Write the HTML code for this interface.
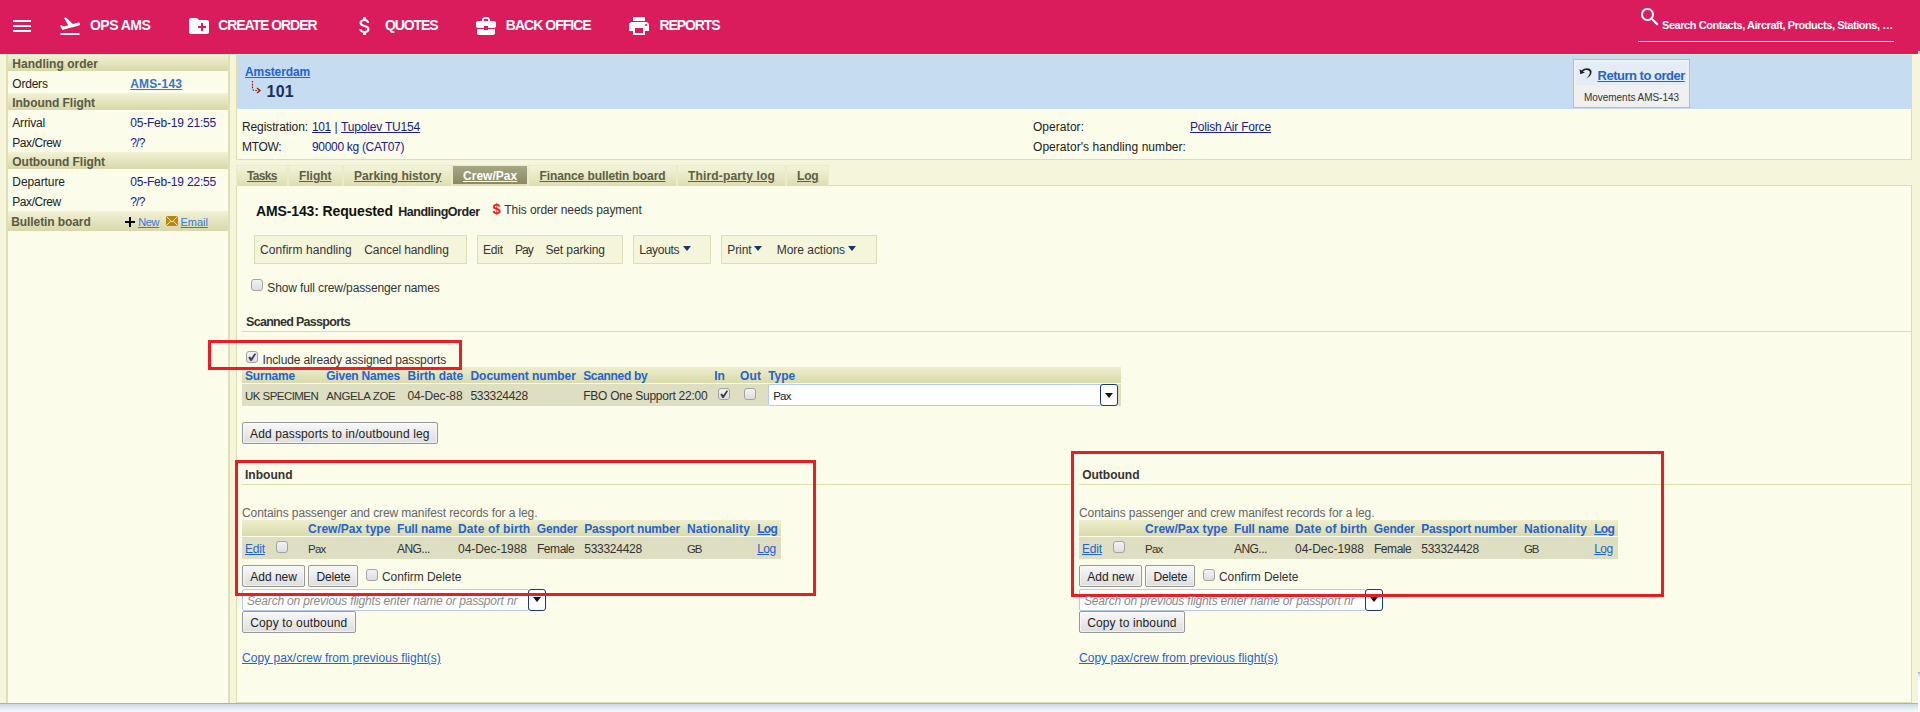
<!DOCTYPE html>
<html lang="en">
<head>
<meta charset="utf-8">
<title>Crew/Pax - AMS-143</title>
<style>
html,body{margin:0;padding:0;}
body{background:#F5F5DC;font-family:"Liberation Sans",sans-serif;font-size:12px;overflow:hidden;}
#page{position:relative;width:1920px;height:712px;overflow:hidden;background:#F5F5DC;}
#page div,#page svg{position:absolute;box-sizing:border-box;}
.t{position:absolute;white-space:pre;font-family:"Liberation Sans",sans-serif;text-decoration-thickness:1px;text-underline-offset:0.5px;}
a.t{cursor:pointer;}
.btn{background:linear-gradient(#f8f8f8,#dedede);border:1px solid #979797;border-radius:2px;box-shadow:inset 0 0 0 1px rgba(255,255,255,.55);}
.cb{background:linear-gradient(#f2f2f2,#dedede);border:1px solid #A3A3A3;border-radius:3px;}
.hrow{background:linear-gradient(#F2F2D6,#D8D8AA);}
.thead{background:linear-gradient(#EEEECC,#DADAAC);}
.trow{background:#DEDEC2;}
.red{border:3px solid #ED1C24;}

</style>
</head>
<body>
<div id="page">
<div style="left:6px;top:54px;width:224px;height:650px;background:#FBFCEA;border-left:2px solid #E0E0B4;border-right:2px solid #E0E0B4;"></div>
<div class="hrow" style="left:8px;top:54px;width:220px;height:17.3px;"></div>
<div class="hrow" style="left:8px;top:93px;width:220px;height:17.3px;"></div>
<div class="hrow" style="left:8px;top:152px;width:220px;height:17.3px;"></div>
<div class="hrow" style="left:8px;top:211px;width:220px;height:19.5px;"></div>
<svg style="left:125px;top:217px" width="10" height="10" viewBox="0 0 10 10"><path d="M4 0h2v4h4v2H6v4H4V6H0V4h4z" fill="#000"/></svg>
<svg style="left:166px;top:216px" width="12" height="10" viewBox="0 0 12 10"><rect width="12" height="10" fill="#B8860B"/><path d="M0.3 0.3L6 6L11.7 0.3M0.3 9.7L4.6 5M11.7 9.7L7.4 5" stroke="#F6EFD0" stroke-width="1" fill="none"/></svg>
<div style="left:236px;top:55px;width:1676px;height:105px;background:#FBFCEA;border:1px solid #DDDDB0;border-top:none;"></div>
<div style="left:237px;top:55px;width:1674px;height:53.5px;background:#C5DCF1;"></div>
<svg style="left:250px;top:80px" width="12" height="15" viewBox="0 0 12 15"><path d="M2.5 1V8Q2.5 10.5 5 10.5H8.5" stroke="#9B0E0E" stroke-width="1.1" stroke-dasharray="1.6 1.2" fill="none"/><path d="M7 8L10 10.5L7 13" stroke="#9B0E0E" stroke-width="1.3" fill="none"/></svg>
<div style="left:1573px;top:59px;width:117px;height:49px;background:#F0F0F0;border:1px solid #BDBDBD;"></div>
<div style="left:1576px;top:62px;width:111px;height:23px;background:#E4ECF5;"></div>
<svg style="left:1579px;top:67px" width="13" height="12" viewBox="0 0 13 12"><path d="M0.5 2.2L1.3 7.2L6 5.6L3.8 4.6C5.6 2.6 9.6 2.4 10.6 4.6C11.4 6.6 9.6 9.6 7 11.4C11.4 9.8 13.4 6.4 12.2 3.6C10.8 0.6 5.6 0.6 2.6 3.6Z" fill="#222"/></svg>
<div style="left:236px;top:185px;width:1676px;height:518px;background:#FBFCEA;border:1px solid #DDDDB0;"></div>
<div style="left:236px;top:165px;width:52px;height:21px;background:linear-gradient(#F3F3DA,#DEDEB0);border:1px solid #EBEBCB;border-bottom:none;"></div>
<div style="left:288px;top:165px;width:55px;height:21px;background:linear-gradient(#F3F3DA,#DEDEB0);border:1px solid #EBEBCB;border-bottom:none;"></div>
<div style="left:343px;top:165px;width:109px;height:21px;background:linear-gradient(#F3F3DA,#DEDEB0);border:1px solid #EBEBCB;border-bottom:none;"></div>
<div style="left:452px;top:165px;width:76px;height:21px;background:linear-gradient(#F3F3DA,#DEDEB0);border:1px solid #EBEBCB;border-bottom:none;"></div>
<div style="left:453px;top:166px;width:74px;height:18px;background:linear-gradient(#A7A785,#8A8A62);"></div>
<div style="left:528px;top:165px;width:149px;height:21px;background:linear-gradient(#F3F3DA,#DEDEB0);border:1px solid #EBEBCB;border-bottom:none;"></div>
<div style="left:677px;top:165px;width:109px;height:21px;background:linear-gradient(#F3F3DA,#DEDEB0);border:1px solid #EBEBCB;border-bottom:none;"></div>
<div style="left:786px;top:165px;width:43px;height:21px;background:linear-gradient(#F3F3DA,#DEDEB0);border:1px solid #EBEBCB;border-bottom:none;"></div>
<div style="left:254px;top:235px;width:213px;height:29px;background:#F5F5DC;border:1px solid #DEDEB2;"></div>
<div style="left:477px;top:235px;width:146px;height:29px;background:#F5F5DC;border:1px solid #DEDEB2;"></div>
<div style="left:633px;top:235px;width:78px;height:29px;background:#F5F5DC;border:1px solid #DEDEB2;"></div>
<div style="left:721px;top:235px;width:156px;height:29px;background:#F5F5DC;border:1px solid #DEDEB2;"></div>
<svg style="left:682.5px;top:246px" width="8" height="5" viewBox="0 0 8 5"><path d="M0 0H8L4 5Z" fill="#1B3664"/></svg>
<svg style="left:754.4px;top:246px" width="8" height="5" viewBox="0 0 8 5"><path d="M0 0H8L4 5Z" fill="#1B3664"/></svg>
<svg style="left:848.4px;top:246px" width="8" height="5" viewBox="0 0 8 5"><path d="M0 0H8L4 5Z" fill="#1B3664"/></svg>
<div class="cb" style="left:251px;top:279.3px;width:12px;height:12px;"></div>
<div style="left:242px;top:331px;width:1669px;height:1px;background:#DCDCAE;"></div>
<div class="thead" style="left:242px;top:367px;width:879px;height:16px;"></div>
<div class="trow" style="left:242px;top:384px;width:879px;height:22px;"></div>
<div class="cb" style="left:718px;top:388px;width:12px;height:12px;"><svg style="left:0px;top:0px" width="10" height="10" viewBox="0 0 10 10"><path d="M1.3 5.6L3 4.6L4.2 6.3L7.7 1.2L9.1 2L4.7 8.9H3.5Z" fill="#3C3C3C"/></svg></div>
<div class="cb" style="left:744px;top:388px;width:12px;height:12px;"></div>
<div style="left:768px;top:384px;width:350px;height:22px;background:#FFFFFF;border:1px solid #B4CDE8;border-radius:2px;"></div>
<div style="left:1100px;top:384px;width:18px;height:22px;background:#FFFFFF;border:1px solid #1B3A6B;border-radius:3px;"><svg style="left:4px;top:8px" width="8" height="5" viewBox="0 0 8 5"><path d="M0 0H8L4 5Z" fill="#111"/></svg></div>
<div class="red" style="left:208px;top:340px;width:254px;height:30px;"></div>
<div class="cb" style="left:246px;top:351.2px;width:12px;height:12px;"><svg style="left:0px;top:0px" width="10" height="10" viewBox="0 0 10 10"><path d="M1.3 5.6L3 4.6L4.2 6.3L7.7 1.2L9.1 2L4.7 8.9H3.5Z" fill="#3C3C3C"/></svg></div>
<div class="btn" style="left:242px;top:422px;width:196px;height:22px;"></div>
<div style="left:242px;top:484px;width:828px;height:1px;background:#DCDCAE;"></div>
<div style="left:1079px;top:484px;width:832px;height:1px;background:#DCDCAE;"></div>
<div class="thead" style="left:242px;top:520px;width:539px;height:16px;"></div>
<div class="trow" style="left:242px;top:537px;width:539px;height:22px;"></div>
<div class="cb" style="left:276px;top:541px;width:12px;height:12px;"></div>
<div class="btn" style="left:242px;top:565.2px;width:62.5px;height:22px;"></div>
<div class="btn" style="left:308.3px;top:565.2px;width:49.5px;height:22px;"></div>
<div class="cb" style="left:366px;top:568.5px;width:12px;height:12px;"></div>
<div style="left:242px;top:589px;width:287px;height:22px;background:#FFFFFF;border:1px solid #B4CDE8;border-radius:2px;"></div>
<div style="left:528px;top:589px;width:17.6px;height:22px;background:#FFFFFF;border:1px solid #1B3A6B;border-radius:3px;"><svg style="left:4px;top:7px" width="8" height="5" viewBox="0 0 8 5"><path d="M0 0H8L4 5Z" fill="#111"/></svg></div>
<div class="btn" style="left:242px;top:611px;width:113.8px;height:22px;"></div>
<div class="red" style="left:235px;top:460px;width:581px;height:136px;"></div>
<div class="thead" style="left:1079px;top:520px;width:539px;height:16px;"></div>
<div class="trow" style="left:1079px;top:537px;width:539px;height:22px;"></div>
<div class="cb" style="left:1113px;top:541px;width:12px;height:12px;"></div>
<div class="btn" style="left:1079px;top:565.2px;width:62.5px;height:22px;"></div>
<div class="btn" style="left:1145.3px;top:565.2px;width:49.5px;height:22px;"></div>
<div class="cb" style="left:1203px;top:568.5px;width:12px;height:12px;"></div>
<div style="left:1079px;top:589px;width:287px;height:22px;background:#FFFFFF;border:1px solid #B4CDE8;border-radius:2px;"></div>
<div style="left:1365px;top:589px;width:17.6px;height:22px;background:#FFFFFF;border:1px solid #1B3A6B;border-radius:3px;"><svg style="left:4px;top:7px" width="8" height="5" viewBox="0 0 8 5"><path d="M0 0H8L4 5Z" fill="#111"/></svg></div>
<div class="btn" style="left:1079px;top:611px;width:105.5px;height:22px;"></div>
<div class="red" style="left:1071px;top:451px;width:593px;height:146px;"></div>
<div style="left:0px;top:703px;width:1920px;height:1px;background:#9FB4C8;"></div>
<div style="left:0px;top:704px;width:1920px;height:8px;background:linear-gradient(#C9D7E5 0px,#E3ECF3 4px,#F1F9FC 8px);"></div>
<div style="left:1918px;top:672px;width:2px;height:40px;background:linear-gradient(#93A9C2 0px,#C9D7E5 2px,#FFFFFF 6px);"></div>
<div style="left:0px;top:0px;width:1920px;height:51px;background:#DA1C5D;"></div>
<div style="left:0px;top:51px;width:1918px;height:3px;background:#DA1C5D;"></div>
<div style="left:13px;top:20px;width:18px;height:2px;background:#fff;"></div>
<div style="left:13px;top:25px;width:18px;height:2px;background:#fff;"></div>
<div style="left:13px;top:30px;width:18px;height:2px;background:#fff;"></div>
<svg style="left:58px;top:13.5px" width="24" height="24" viewBox="0 0 24 24"><path d="M2.5 19h19v2h-19zm19.57-9.36c-.21-.8-1.04-1.28-1.84-1.06L14.92 10l-6.9-6.43-1.93.51 4.14 7.17-4.97 1.33-1.97-1.54-1.45.39 1.82 3.16.77 1.33 1.6-.43 5.31-1.42 4.35-1.16L21 11.49c.81-.23 1.28-1.05 1.07-1.85z" fill="#fff"/></svg>
<svg style="left:187px;top:13.5px" width="24" height="24" viewBox="0 0 24 24"><path d="M20 6h-8l-2-2H4c-1.11 0-1.99.89-1.99 2L2 18c0 1.11.89 2 2 2h16c1.11 0 2-.89 2-2V8c0-1.11-.89-2-2-2zm-1 8h-3v3h-2v-3h-3v-2h3V9h2v3h3v2z" fill="#fff"/></svg>
<svg style="left:353px;top:14px" width="24" height="24" viewBox="0 0 24 24"><path d="M11.8 10.9c-2.27-.59-3-1.2-3-2.15 0-1.09 1.01-1.85 2.7-1.85 1.78 0 2.44.85 2.5 2.1h2.21c-.07-1.72-1.12-3.3-3.21-3.81V3h-3v2.16c-1.94.42-3.5 1.68-3.5 3.61 0 2.31 1.91 3.46 4.7 4.13 2.5.6 3 1.48 3 2.41 0 .69-.49 1.79-2.7 1.79-2.06 0-2.87-.92-2.98-2.1h-2.2c.12 2.19 1.76 3.42 3.68 3.83V21h3v-2.15c1.95-.37 3.5-1.5 3.5-3.55 0-2.84-2.43-3.81-4.7-4.4z" fill="#fff"/></svg>
<svg style="left:474px;top:14px" width="24" height="24" viewBox="0 0 24 24"><path d="M10 16v-1H3.01L3 19c0 1.11.89 2 2 2h14c1.11 0 2-.89 2-2v-4h-7v1h-4zm10-9h-4.01V5l-2-2h-4l-2 2v2H4c-1.1 0-2 .9-2 2v3c0 1.11.89 2 2 2h6v-2h4v2h6c1.1 0 2-.9 2-2V9c0-1.1-.9-2-2-2zm-6 0h-4V5h4v2z" fill="#fff"/></svg>
<svg style="left:627px;top:14px" width="24" height="24" viewBox="0 0 24 24"><path d="M19 8H5c-1.66 0-3 1.34-3 3v6h4v4h12v-4h4v-6c0-1.66-1.34-3-3-3zm-3 11H8v-5h8v5zm3-7c-.55 0-1-.45-1-1s.45-1 1-1 1 .45 1 1-.45 1-1 1zm-1-9H6v4h12V3z" fill="#fff"/></svg>
<svg style="left:1637.5px;top:5px" width="24" height="24" viewBox="0 0 24 24"><path d="M15.5 14h-.79l-.28-.27C15.41 12.59 16 11.11 16 9.5 16 5.91 13.09 3 9.5 3S3 5.91 3 9.500 5.91 16 9.5 16c1.61 0 3.09-.59 4.23-1.570l.27.28v.79l5 4.99L20.49 19l-4.990-5zm-6 0C7.010 14 5 11.990 5 9.500S7.010 5 9.500 5 14 7.010 14 9.500 11.990 14 9.500 14z" fill="#fff"/></svg>
<div style="left:1638px;top:41px;width:256px;height:1px;background:#fff;"></div>
<span class="t" style="left:12.3px;top:55px;font-size:12px;line-height:18px;color:#5A5A42;font-weight:700;letter-spacing:0.026px;">Handling order</span>
<span class="t" style="left:12.3px;top:75px;font-size:12px;line-height:18px;color:#222;letter-spacing:-0.216px;">Orders</span>
<a class="t" style="left:130.2px;top:75px;font-size:12px;line-height:18px;color:#3A74C4;font-weight:700;text-decoration:underline;letter-spacing:0.171px;">AMS-143</a>
<span class="t" style="left:12.3px;top:94px;font-size:12px;line-height:18px;color:#5A5A42;font-weight:700;letter-spacing:-0.045px;">Inbound Flight</span>
<span class="t" style="left:12.3px;top:114px;font-size:12px;line-height:18px;color:#222;letter-spacing:-0.187px;">Arrival</span>
<span class="t" style="left:130.2px;top:114px;font-size:12px;line-height:18px;color:#20208C;letter-spacing:-0.195px;">05-Feb-19 21:55</span>
<span class="t" style="left:12.3px;top:134px;font-size:12px;line-height:18px;color:#222;letter-spacing:-0.442px;">Pax/Crew</span>
<span class="t" style="left:130.2px;top:134px;font-size:12px;line-height:18px;color:#20208C;letter-spacing:-0.755px;">?/?</span>
<span class="t" style="left:12.3px;top:153px;font-size:12px;line-height:18px;color:#5A5A42;font-weight:700;letter-spacing:-0.042px;">Outbound Flight</span>
<span class="t" style="left:12.3px;top:173px;font-size:12px;line-height:18px;color:#222;letter-spacing:-0.079px;">Departure</span>
<span class="t" style="left:130.2px;top:173px;font-size:12px;line-height:18px;color:#20208C;letter-spacing:-0.195px;">05-Feb-19 22:55</span>
<span class="t" style="left:12.3px;top:193px;font-size:12px;line-height:18px;color:#222;letter-spacing:-0.442px;">Pax/Crew</span>
<span class="t" style="left:130.2px;top:193px;font-size:12px;line-height:18px;color:#20208C;letter-spacing:-0.755px;">?/?</span>
<span class="t" style="left:11.3px;top:213px;font-size:12px;line-height:18px;color:#5A5A42;font-weight:700;letter-spacing:-0.094px;">Bulletin board</span>
<a class="t" style="left:138.2px;top:214px;font-size:11px;line-height:16px;color:#3B78D8;text-decoration:underline;letter-spacing:-0.326px;">New</a>
<a class="t" style="left:180.6px;top:214px;font-size:11px;line-height:16px;color:#3B78D8;text-decoration:underline;letter-spacing:-0.070px;">Email</a>
<a class="t" style="left:245px;top:63px;font-size:12px;line-height:18px;color:#2563CE;font-weight:700;text-decoration:underline;letter-spacing:-0.098px;">Amsterdam</a>
<span class="t" style="left:266.5px;top:81px;font-size:16px;line-height:21px;color:#1B2F5C;font-weight:700;letter-spacing:0.239px;">101</span>
<a class="t" style="left:1597.5px;top:66px;font-size:13px;line-height:19px;color:#2563CE;font-weight:700;text-decoration:underline;letter-spacing:-0.491px;">Return to order</a>
<span class="t" style="left:1584px;top:90px;font-size:10px;line-height:15px;color:#333;letter-spacing:-0.037px;">Movements AMS-143</span>
<span class="t" style="left:242px;top:118px;font-size:12px;line-height:18px;color:#222;letter-spacing:-0.110px;">Registration:</span>
<a class="t" style="left:312px;top:118px;font-size:12px;line-height:18px;color:#20208C;text-decoration:underline;letter-spacing:-0.412px;">101</a>
<span class="t" style="left:334.5px;top:118px;font-size:12px;line-height:18px;color:#20208C;letter-spacing:-0.625px;">|</span>
<a class="t" style="left:341px;top:118px;font-size:12px;line-height:18px;color:#20208C;text-decoration:underline;letter-spacing:-0.175px;">Tupolev TU154</a>
<span class="t" style="left:242px;top:138px;font-size:12px;line-height:18px;color:#222;letter-spacing:-0.309px;">MTOW:</span>
<span class="t" style="left:312px;top:138px;font-size:12px;line-height:18px;color:#20208C;letter-spacing:-0.314px;">90000 kg (CAT07)</span>
<span class="t" style="left:1033px;top:118px;font-size:12px;line-height:18px;color:#222;letter-spacing:0.035px;">Operator:</span>
<a class="t" style="left:1190px;top:118px;font-size:12px;line-height:18px;color:#20208C;text-decoration:underline;letter-spacing:-0.196px;">Polish Air Force</a>
<span class="t" style="left:1033px;top:138px;font-size:12px;line-height:18px;color:#222;letter-spacing:0.048px;">Operator&#x27;s handling number:</span>
<a class="t" style="left:247px;top:167px;font-size:12px;line-height:18px;color:#5E5E48;font-weight:700;text-decoration:underline;letter-spacing:-0.698px;">Tasks</a>
<a class="t" style="left:299px;top:167px;font-size:12px;line-height:18px;color:#5E5E48;font-weight:700;text-decoration:underline;letter-spacing:-0.028px;">Flight</a>
<a class="t" style="left:354px;top:167px;font-size:12px;line-height:18px;color:#5E5E48;font-weight:700;text-decoration:underline;letter-spacing:0.010px;">Parking history</a>
<a class="t" style="left:463px;top:167px;font-size:12px;line-height:18px;color:#FFFFFF;font-weight:700;text-decoration:underline;letter-spacing:0.023px;">Crew/Pax</a>
<a class="t" style="left:539.5px;top:167px;font-size:12px;line-height:18px;color:#5E5E48;font-weight:700;text-decoration:underline;letter-spacing:-0.094px;">Finance bulletin board</a>
<a class="t" style="left:688px;top:167px;font-size:12px;line-height:18px;color:#5E5E48;font-weight:700;text-decoration:underline;letter-spacing:0.161px;">Third-party log</a>
<a class="t" style="left:797px;top:167px;font-size:12px;line-height:18px;color:#5E5E48;font-weight:700;text-decoration:underline;letter-spacing:-0.200px;">Log</a>
<span class="t" style="left:256px;top:201px;font-size:14px;line-height:20px;color:#111;font-weight:700;letter-spacing:-0.129px;">AMS-143: Requested</span>
<span class="t" style="left:398.2px;top:203px;font-size:12.5px;line-height:18px;color:#222;font-weight:700;letter-spacing:-0.473px;">HandlingOrder</span>
<span class="t" style="left:492.4px;top:198px;font-size:15px;line-height:21px;color:#EE1C25;font-weight:700;letter-spacing:-0.344px;">$</span>
<span class="t" style="left:504.3px;top:201px;font-size:12px;line-height:18px;color:#333;letter-spacing:-0.085px;">This order needs payment</span>
<span class="t" style="left:260px;top:241px;font-size:12px;line-height:18px;color:#333;letter-spacing:0.070px;">Confirm handling</span>
<span class="t" style="left:364.3px;top:241px;font-size:12px;line-height:18px;color:#333;letter-spacing:-0.108px;">Cancel handling</span>
<span class="t" style="left:483px;top:241px;font-size:12px;line-height:18px;color:#333;letter-spacing:-0.225px;">Edit</span>
<span class="t" style="left:515px;top:241px;font-size:12px;line-height:18px;color:#333;letter-spacing:-0.995px;">Pay</span>
<span class="t" style="left:545.4px;top:241px;font-size:12px;line-height:18px;color:#333;letter-spacing:-0.105px;">Set parking</span>
<span class="t" style="left:639.3px;top:241px;font-size:12px;line-height:18px;color:#333;letter-spacing:-0.297px;">Layouts</span>
<span class="t" style="left:727.2px;top:241px;font-size:12px;line-height:18px;color:#333;letter-spacing:-0.064px;">Print</span>
<span class="t" style="left:776.7px;top:241px;font-size:12px;line-height:18px;color:#333;letter-spacing:-0.026px;">More actions</span>
<span class="t" style="left:267.3px;top:279px;font-size:12px;line-height:18px;color:#333;letter-spacing:-0.125px;">Show full crew/passenger names</span>
<span class="t" style="left:246px;top:313px;font-size:12.5px;line-height:18px;color:#333;font-weight:700;letter-spacing:-0.704px;">Scanned Passports</span>
<span class="t" style="left:245px;top:367px;font-size:12px;line-height:18px;color:#2563CE;font-weight:700;letter-spacing:-0.209px;">Surname</span>
<span class="t" style="left:326.2px;top:367px;font-size:12px;line-height:18px;color:#2563CE;font-weight:700;letter-spacing:-0.214px;">Given Names</span>
<span class="t" style="left:407.5px;top:367px;font-size:12px;line-height:18px;color:#2563CE;font-weight:700;letter-spacing:-0.033px;">Birth date</span>
<span class="t" style="left:470.5px;top:367px;font-size:12px;line-height:18px;color:#2563CE;font-weight:700;letter-spacing:-0.049px;">Document number</span>
<span class="t" style="left:583.2px;top:367px;font-size:12px;line-height:18px;color:#2563CE;font-weight:700;letter-spacing:-0.322px;">Scanned by</span>
<span class="t" style="left:714.2px;top:367px;font-size:12px;line-height:18px;color:#2563CE;font-weight:700;letter-spacing:0.085px;">In</span>
<span class="t" style="left:740px;top:367px;font-size:12px;line-height:18px;color:#2563CE;font-weight:700;letter-spacing:0.211px;">Out</span>
<span class="t" style="left:768.2px;top:367px;font-size:12px;line-height:18px;color:#2563CE;font-weight:700;letter-spacing:-0.036px;">Type</span>
<span class="t" style="left:245px;top:388px;font-size:11.5px;line-height:16px;color:#333;letter-spacing:-0.548px;">UK SPECIMEN</span>
<span class="t" style="left:326.2px;top:388px;font-size:11.5px;line-height:16px;color:#333;letter-spacing:-0.375px;">ANGELA ZOE</span>
<span class="t" style="left:407.5px;top:387px;font-size:12px;line-height:18px;color:#333;letter-spacing:-0.121px;">04-Dec-88</span>
<span class="t" style="left:470.5px;top:387px;font-size:12px;line-height:18px;color:#333;letter-spacing:-0.303px;">533324428</span>
<span class="t" style="left:583.2px;top:387px;font-size:12px;line-height:18px;color:#333;letter-spacing:-0.250px;">FBO One Support 22:00</span>
<span class="t" style="left:773.2px;top:388px;font-size:11.5px;line-height:16px;color:#222;letter-spacing:-0.811px;">Pax</span>
<span class="t" style="left:262.5px;top:351px;font-size:12px;line-height:18px;color:#333;letter-spacing:-0.132px;">Include already assigned passports</span>
<span class="t" style="left:250px;top:425px;font-size:12px;line-height:18px;color:#222;letter-spacing:0.128px;">Add passports to in/outbound leg</span>
<span class="t" style="left:245px;top:466px;font-size:12px;line-height:18px;color:#333;font-weight:700;letter-spacing:0.026px;">Inbound</span>
<span class="t" style="left:242px;top:504px;font-size:12px;line-height:18px;color:#666;letter-spacing:-0.098px;">Contains passenger and crew manifest records for a leg.</span>
<span class="t" style="left:308px;top:520px;font-size:12px;line-height:18px;color:#2563CE;font-weight:700;letter-spacing:0.028px;">Crew/Pax type</span>
<span class="t" style="left:397px;top:520px;font-size:12px;line-height:18px;color:#2563CE;font-weight:700;letter-spacing:-0.143px;">Full name</span>
<span class="t" style="left:458px;top:520px;font-size:12px;line-height:18px;color:#2563CE;font-weight:700;letter-spacing:0.122px;">Date of birth</span>
<span class="t" style="left:536.8px;top:520px;font-size:12px;line-height:18px;color:#2563CE;font-weight:700;letter-spacing:-0.203px;">Gender</span>
<span class="t" style="left:584.3px;top:520px;font-size:12px;line-height:18px;color:#2563CE;font-weight:700;letter-spacing:-0.207px;">Passport number</span>
<span class="t" style="left:687px;top:520px;font-size:12px;line-height:18px;color:#2563CE;font-weight:700;letter-spacing:0.148px;">Nationality</span>
<a class="t" style="left:757.2px;top:520px;font-size:12px;line-height:18px;color:#2563CE;font-weight:700;text-decoration:underline;letter-spacing:-0.680px;">Log</a>
<a class="t" style="left:245px;top:540px;font-size:12px;line-height:18px;color:#2563CE;text-decoration:underline;letter-spacing:-0.225px;">Edit</a>
<span class="t" style="left:308px;top:541px;font-size:11.5px;line-height:16px;color:#333;letter-spacing:-0.731px;">Pax</span>
<span class="t" style="left:397px;top:540px;font-size:12px;line-height:18px;color:#333;letter-spacing:-0.548px;">ANG...</span>
<span class="t" style="left:458px;top:540px;font-size:12px;line-height:18px;color:#333;letter-spacing:-0.036px;">04-Dec-1988</span>
<span class="t" style="left:537px;top:540px;font-size:12px;line-height:18px;color:#333;letter-spacing:-0.457px;">Female</span>
<span class="t" style="left:584.3px;top:540px;font-size:12px;line-height:18px;color:#333;letter-spacing:-0.280px;">533324428</span>
<span class="t" style="left:687px;top:541px;font-size:11.5px;line-height:16px;color:#333;letter-spacing:-1.283px;">GB</span>
<a class="t" style="left:757.2px;top:540px;font-size:12px;line-height:18px;color:#2563CE;text-decoration:underline;letter-spacing:-0.493px;">Log</a>
<span class="t" style="left:250.2px;top:568px;font-size:12px;line-height:18px;color:#222;letter-spacing:0.015px;">Add new</span>
<span class="t" style="left:316.4px;top:568px;font-size:12px;line-height:18px;color:#222;letter-spacing:-0.143px;">Delete</span>
<span class="t" style="left:382px;top:568px;font-size:12px;line-height:18px;color:#333;letter-spacing:-0.047px;">Confirm Delete</span>
<span class="t" style="left:247px;top:592px;font-size:12px;line-height:18px;color:#8A8A8A;font-style:italic;letter-spacing:-0.178px;">Search on previous flights enter name or passport nr</span>
<span class="t" style="left:250.2px;top:614px;font-size:12px;line-height:18px;color:#222;letter-spacing:0.152px;">Copy to outbound</span>
<a class="t" style="left:242px;top:649px;font-size:12px;line-height:18px;color:#2563CE;text-decoration:underline;letter-spacing:0.020px;">Copy pax/crew from previous flight(s)</a>
<span class="t" style="left:1082.2px;top:466px;font-size:12px;line-height:18px;color:#333;font-weight:700;">Outbound</span>
<span class="t" style="left:1079px;top:504px;font-size:12px;line-height:18px;color:#666;letter-spacing:-0.098px;">Contains passenger and crew manifest records for a leg.</span>
<span class="t" style="left:1145px;top:520px;font-size:12px;line-height:18px;color:#2563CE;font-weight:700;letter-spacing:0.028px;">Crew/Pax type</span>
<span class="t" style="left:1234px;top:520px;font-size:12px;line-height:18px;color:#2563CE;font-weight:700;letter-spacing:-0.143px;">Full name</span>
<span class="t" style="left:1295px;top:520px;font-size:12px;line-height:18px;color:#2563CE;font-weight:700;letter-spacing:0.122px;">Date of birth</span>
<span class="t" style="left:1373.8px;top:520px;font-size:12px;line-height:18px;color:#2563CE;font-weight:700;letter-spacing:-0.203px;">Gender</span>
<span class="t" style="left:1421.3px;top:520px;font-size:12px;line-height:18px;color:#2563CE;font-weight:700;letter-spacing:-0.207px;">Passport number</span>
<span class="t" style="left:1524px;top:520px;font-size:12px;line-height:18px;color:#2563CE;font-weight:700;letter-spacing:0.148px;">Nationality</span>
<a class="t" style="left:1594.2px;top:520px;font-size:12px;line-height:18px;color:#2563CE;font-weight:700;text-decoration:underline;letter-spacing:-0.680px;">Log</a>
<a class="t" style="left:1082px;top:540px;font-size:12px;line-height:18px;color:#2563CE;text-decoration:underline;letter-spacing:-0.225px;">Edit</a>
<span class="t" style="left:1145px;top:541px;font-size:11.5px;line-height:16px;color:#333;letter-spacing:-0.731px;">Pax</span>
<span class="t" style="left:1234px;top:540px;font-size:12px;line-height:18px;color:#333;letter-spacing:-0.548px;">ANG...</span>
<span class="t" style="left:1295px;top:540px;font-size:12px;line-height:18px;color:#333;letter-spacing:-0.036px;">04-Dec-1988</span>
<span class="t" style="left:1374px;top:540px;font-size:12px;line-height:18px;color:#333;letter-spacing:-0.457px;">Female</span>
<span class="t" style="left:1421.3px;top:540px;font-size:12px;line-height:18px;color:#333;letter-spacing:-0.280px;">533324428</span>
<span class="t" style="left:1524px;top:541px;font-size:11.5px;line-height:16px;color:#333;letter-spacing:-1.283px;">GB</span>
<a class="t" style="left:1594.2px;top:540px;font-size:12px;line-height:18px;color:#2563CE;text-decoration:underline;letter-spacing:-0.493px;">Log</a>
<span class="t" style="left:1087.2px;top:568px;font-size:12px;line-height:18px;color:#222;letter-spacing:0.015px;">Add new</span>
<span class="t" style="left:1153.4px;top:568px;font-size:12px;line-height:18px;color:#222;letter-spacing:-0.143px;">Delete</span>
<span class="t" style="left:1219px;top:568px;font-size:12px;line-height:18px;color:#333;letter-spacing:-0.047px;">Confirm Delete</span>
<span class="t" style="left:1084px;top:592px;font-size:12px;line-height:18px;color:#8A8A8A;font-style:italic;letter-spacing:-0.178px;">Search on previous flights enter name or passport nr</span>
<span class="t" style="left:1087.2px;top:614px;font-size:12px;line-height:18px;color:#222;letter-spacing:0.131px;">Copy to inbound</span>
<a class="t" style="left:1079px;top:649px;font-size:12px;line-height:18px;color:#2563CE;text-decoration:underline;letter-spacing:0.020px;">Copy pax/crew from previous flight(s)</a>
<span class="t" style="left:90px;top:15px;font-size:14px;line-height:20px;color:#fff;font-weight:700;letter-spacing:-0.546px;">OPS AMS</span>
<span class="t" style="left:218.2px;top:15px;font-size:14px;line-height:20px;color:#fff;font-weight:700;letter-spacing:-1.058px;">CREATE ORDER</span>
<span class="t" style="left:385px;top:15px;font-size:14px;line-height:20px;color:#fff;font-weight:700;letter-spacing:-1.114px;">QUOTES</span>
<span class="t" style="left:505.8px;top:15px;font-size:14px;line-height:20px;color:#fff;font-weight:700;letter-spacing:-0.978px;">BACK OFFICE</span>
<span class="t" style="left:659.5px;top:15px;font-size:14px;line-height:20px;color:#fff;font-weight:700;letter-spacing:-1.106px;">REPORTS</span>
<span class="t" style="left:1662px;top:17px;font-size:11px;line-height:16px;color:#fff;font-weight:700;letter-spacing:-0.443px;">Search Contacts, Aircraft, Products, Stations, …</span>
</div>
</body>
</html>
